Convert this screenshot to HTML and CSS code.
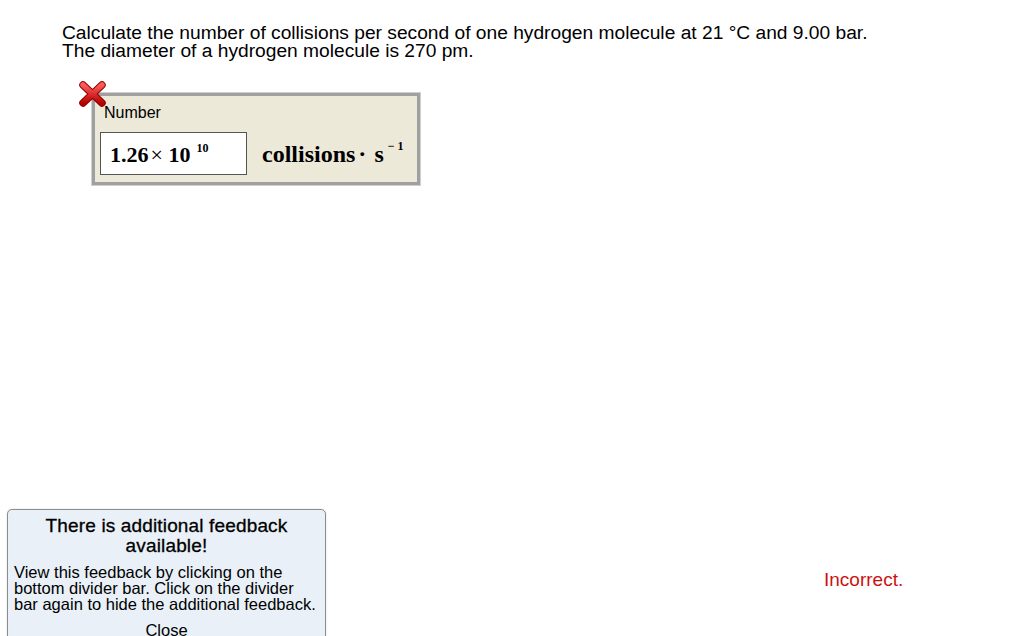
FILE: index.html
```html
<!DOCTYPE html>
<html>
<head>
<meta charset="utf-8">
<link rel="stylesheet" href="styles.css">
</head>
<body>
<div class="page">
  <div class="question">
    <p class="q1">Calculate the number of collisions per second of one hydrogen molecule at 21 °C and 9.00 bar.</p>
    <p class="q2">The diameter of a hydrogen molecule is 270 pm.</p>
  </div>
  <div class="answer">
    <svg class="xmark" width="28" height="26" viewBox="0 0 28 26">
      <defs>
        <linearGradient id="rg" x1="0" y1="0" x2="0" y2="1">
          <stop offset="0" stop-color="#ff5a5a"/>
          <stop offset="1" stop-color="#b80000"/>
        </linearGradient>
      </defs>
      <path d="M4 4 L23 22 M23 4 L4 22" stroke="#8a0000" stroke-width="7.5" stroke-linecap="round"/>
      <path d="M4 4 L23 22 M23 4 L4 22" stroke="url(#rg)" stroke-width="5.5" stroke-linecap="round"/>
    </svg>
    <div class="label">Number</div>
    <div class="row">
      <div class="input">1.26<span class="times">×</span> 10<sup class="sup">10</sup></div>
      <div class="unit">collisions<span class="dot">·</span> s<sup class="sup2">− 1</sup></div>
    </div>
  </div>
  <div class="footer">
    <div class="feedback">
      <div class="fb-title">There is additional feedback<br>available!</div>
      <div class="fb-body">View this feedback by clicking on the<br>bottom divider bar. Click on the divider<br>bar again to hide the additional feedback.</div>
      <div class="fb-close">Close</div>
    </div>
    <div class="incorrect">Incorrect.</div>
  </div>
</div>
</body>
</html>
```

FILE: styles.css
```css
html, body {
  margin: 0;
  padding: 0;
  background: #ffffff;
}
body {
  font-family: "Liberation Sans", Arial, Helvetica, sans-serif;
  color: #000;
  width: 1024px;
  height: 636px;
  overflow: hidden;
}
.page {
  display: flex;
  flex-direction: column;
  height: 636px;
}
.question {
  padding: 24px 0 0 62px;
}
.question p {
  margin: 0;
  font-size: 19.2px;
  line-height: 18px;
  height: 18px;
}
.answer {
  position: relative;
  margin: 33px 0 0 92px;
  width: 322px;
  height: 86px;
  background: #ece9d8;
  border: 3px solid #a0a0a0;
  box-shadow: 0 0 0 1px #cfcfcf;
}
.xmark {
  position: absolute;
  left: -16px;
  top: -15px;
}
.label {
  font-size: 16px;
  padding: 8px 0 0 9px;
  line-height: 18px;
}
.row {
  display: flex;
  align-items: center;
  margin: 10px 0 0 5px;
}
.input {
  box-sizing: border-box;
  width: 147px;
  height: 43px;
  background: #fff;
  border: 1px solid #555;
  font-family: "Liberation Serif", "Times New Roman", serif;
  font-weight: bold;
  font-size: 22px;
  padding: 12px 0 0 9px;
  line-height: 20px;
}
.times {
  font-weight: normal;
  font-size: 22px;
  margin-left: 2px;
}
.sup {
  font-size: 12px;
  vertical-align: 10px;
  line-height: 0;
  margin-left: 6px;
}
.unit {
  margin-left: 15px;
  font-family: "Liberation Serif", "Times New Roman", serif;
  font-weight: bold;
  font-size: 24px;
  padding-top: 2px;
}
.dot {
  margin: 0 2px 0 3px;
}
.sup2 {
  font-size: 12px;
  vertical-align: 12px;
  line-height: 0;
  margin-left: 4px;
}
.footer {
  margin-top: auto;
  display: flex;
  align-items: flex-start;
  height: 127px;
}
.feedback {
  box-sizing: border-box;
  margin-left: 7px;
  width: 319px;
  height: 140px;
  flex-shrink: 0;
  background: #e9f0f7;
  border: 1px solid #8c8c8c;
  border-radius: 5px;
  box-shadow: 0 0 2px rgba(0,0,0,0.15);
  padding: 6px 6px 0 6px;
}
.fb-title {
  text-align: center;
  font-size: 19px;
  line-height: 20px;
  letter-spacing: 0.15px;
  -webkit-text-stroke: 0.3px #000;
}
.fb-body {
  margin-top: 8px;
  font-size: 16.5px;
  line-height: 16px;
  white-space: nowrap;
}
.fb-close {
  margin-top: 10px;
  text-align: center;
  font-size: 16.5px;
  line-height: 16px;
}
.incorrect {
  margin: 61px 0 0 498px;
  color: #cc1111;
  font-size: 19px;
  line-height: 20px;
}
```
